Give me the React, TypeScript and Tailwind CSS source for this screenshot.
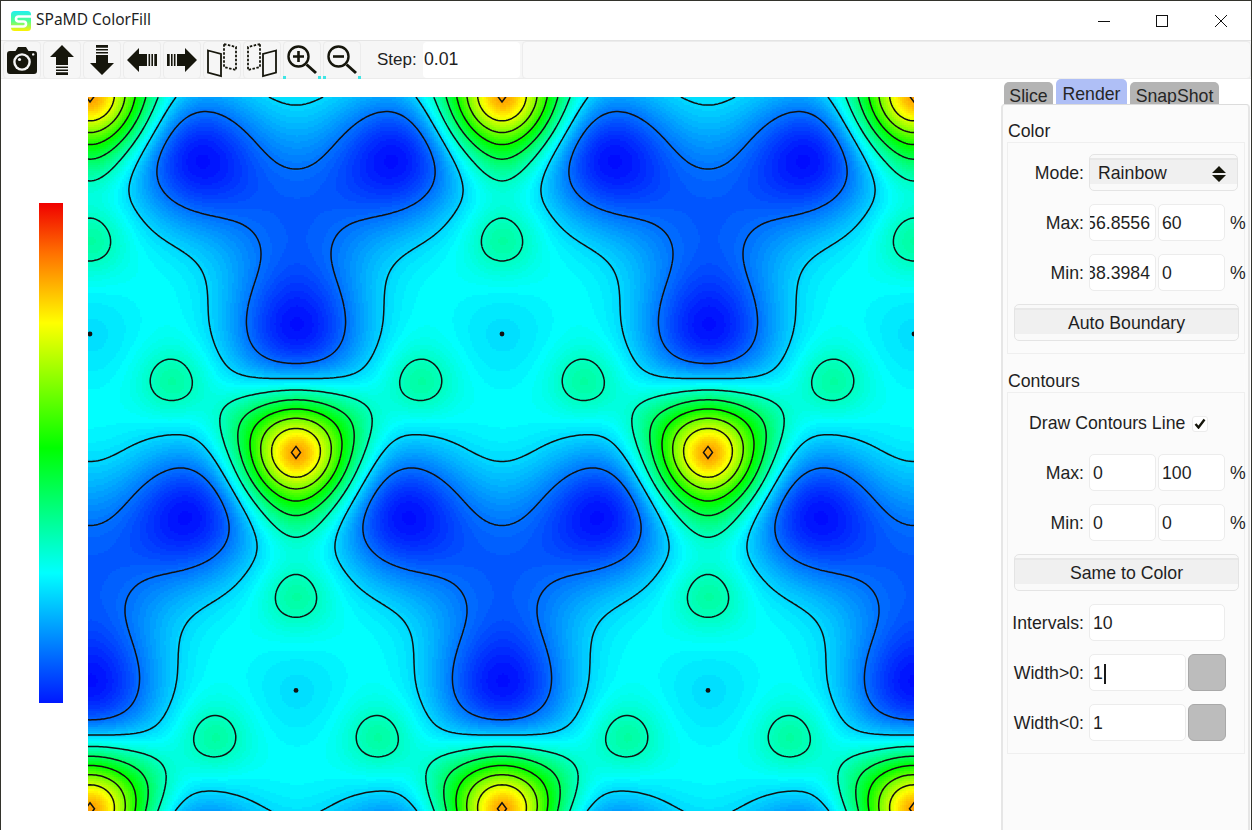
import { useMemo, type ReactNode } from "react";

const HEAT_W = 826;
const HEAT_H = 714;
const CELL = 2;
const LEVELS = [0.11, 0.21, 0.31, 0.41, 0.51, 0.61, 0.71];

type Blob = { x: number; y: number; a: number; s: number };

function latticePoints() {
  const pts: { x: number; y: number }[] = [];
  for (let j = -2; j <= 4; j++) {
    for (let k = -2; k <= 3; k++) {
      const y = 96 + 356.4 * j - 97;
      const x = (j % 2 === 0 ? 90 : 296) + 412 * k - 88;
      pts.push({ x, y });
    }
  }
  return pts;
}

const dirsDown = [
  [0, 1],
  [-0.866, -0.5],
  [0.866, -0.5],
];

function buildBlobs() {
  const blobs: Blob[] = [];
  for (const p of latticePoints()) {
    blobs.push({ x: p.x, y: p.y, a: 0.58, s: 40 });
    blobs.push({ x: p.x, y: p.y, a: 0.03, s: 13 });
    blobs.push({ x: p.x, y: p.y - 238, a: -0.115, s: 55 });
    blobs.push({ x: p.x, y: p.y - 238, a: -0.05, s: 105 });
    blobs.push({ x: p.x, y: p.y + 238, a: -0.058, s: 45 });
    for (const [dx, dy] of dirsDown) {
      blobs.push({ x: p.x + dx * 143, y: p.y + dy * 143, a: 0.085, s: 24 });
      blobs.push({ x: p.x + dx * 70, y: p.y + dy * 70, a: 0.03, s: 20 });
      blobs.push({ x: p.x - dx * 117, y: p.y - dy * 117, a: -0.24, s: 50 });
    }
  }
  return blobs;
}

function rainbow(t: number) {
  const v = Math.max(0, Math.min(1, t));
  let r = 0;
  let g = 0;
  let b = 0;
  if (v < 0.25) {
    g = v * 4 * 255;
    b = 255;
  } else if (v < 0.5) {
    g = 255;
    b = 255 * (1 - (v - 0.25) * 4);
  } else if (v < 0.75) {
    r = (v - 0.5) * 4 * 255;
    g = 255;
  } else {
    r = 255;
    g = 255 * (1 - (v - 0.75) * 4);
  }
  return `rgb(${Math.round(r)},${Math.round(g)},${Math.round(b)})`;
}

function buildHeat() {
  const cols = Math.ceil(HEAT_W / CELL) + 1;
  const rows = Math.ceil(HEAT_H / CELL) + 1;
  const field = new Float32Array(cols * rows).fill(0.29);
  for (const b of buildBlobs()) {
    const reach = b.s * 4;
    const x0 = Math.max(0, Math.floor((b.x - reach) / CELL));
    const x1 = Math.min(cols - 1, Math.ceil((b.x + reach) / CELL));
    const y0 = Math.max(0, Math.floor((b.y - reach) / CELL));
    const y1 = Math.min(rows - 1, Math.ceil((b.y + reach) / CELL));
    const k = 1 / (2 * b.s * b.s);
    for (let j = y0; j <= y1; j++) {
      for (let i = x0; i <= x1; i++) {
        const dx = i * CELL - b.x;
        const dy = j * CELL - b.y;
        field[j * cols + i] += b.a * Math.exp(-(dx * dx + dy * dy) * k);
      }
    }
  }

  // one path per colour band, row runs merged
  const bands = new Map<number, string[]>();
  const STEPS = 96;
  for (let j = 0; j < rows - 1; j++) {
    let start = 0;
    let cur = Math.round(field[j * cols] * STEPS);
    for (let i = 1; i <= cols - 1; i++) {
      const q = i < cols - 1 ? Math.round(field[j * cols + i] * STEPS) : -999;
      if (q !== cur) {
        if (!bands.has(cur)) bands.set(cur, []);
        bands.get(cur)!.push(`M${start * CELL} ${j * CELL}h${(i - start) * CELL}v${CELL}h${-(i - start) * CELL}z`);
        start = i;
        cur = q;
      }
    }
  }
  const fills = [...bands.entries()].map(([q, d]) => ({ color: rainbow(q / STEPS), d: d.join("") }));

  // marching squares
  const seg: string[] = [];
  for (const lv of LEVELS) {
    for (let j = 0; j < rows - 1; j++) {
      for (let i = 0; i < cols - 1; i++) {
        const a = field[j * cols + i];
        const b = field[j * cols + i + 1];
        const c = field[(j + 1) * cols + i + 1];
        const d = field[(j + 1) * cols + i];
        const pts: [number, number][] = [];
        if (a < lv !== b < lv) pts.push([i + (lv - a) / (b - a), j]);
        if (b < lv !== c < lv) pts.push([i + 1, j + (lv - b) / (c - b)]);
        if (d < lv !== c < lv) pts.push([i + (lv - d) / (c - d), j + 1]);
        if (a < lv !== d < lv) pts.push([i, j + (lv - a) / (d - a)]);
        for (let n = 0; n + 1 < pts.length; n += 2) {
          seg.push(
            `M${(pts[n][0] * CELL).toFixed(1)} ${(pts[n][1] * CELL).toFixed(1)}L${(pts[n + 1][0] * CELL).toFixed(1)} ${(pts[n + 1][1] * CELL).toFixed(1)}`,
          );
        }
      }
    }
  }
  return { fills, lines: seg.join("") };
}

function Heatmap() {
  const { fills, lines } = useMemo(buildHeat, []);
  const pts = latticePoints();
  return (
    <svg width={HEAT_W} height={HEAT_H} viewBox={`0 0 ${HEAT_W} ${HEAT_H}`} className="block shrink-0">
      <g shapeRendering="crispEdges">
        {fills.map((f) => (
          <path key={f.color} d={f.d} fill={f.color} />
        ))}
      </g>
      <path d={lines} fill="none" stroke="#111" strokeWidth="1.5" />
      {pts.map((p, n) => (
        <g key={n}>
          <path
            d={`M${p.x} ${p.y - 6}L${p.x + 4.5} ${p.y}L${p.x} ${p.y + 6}L${p.x - 4.5} ${p.y}Z`}
            fill="none"
            stroke="#111"
            strokeWidth="1.5"
          />
          <circle cx={p.x} cy={p.y + 238} r="2.4" fill="#111" />
        </g>
      ))}
    </svg>
  );
}

function ToolButton({ children, marks }: { children: ReactNode; marks?: boolean }) {
  return (
    <button
      type="button"
      className="relative flex h-[38px] w-[38px] items-center justify-center rounded-[4px] border border-[#ececec] bg-[#f6f6f6]"
    >
      {children}
      {marks && (
        <>
          <span className="absolute -bottom-px -left-px h-[3px] w-[3px] bg-[#3fe5e5]" />
          <span className="absolute -bottom-px -right-px h-[3px] w-[3px] bg-[#3fe5e5]" />
        </>
      )}
    </button>
  );
}

function ArrowIcon({ rotate }: { rotate: string }) {
  return (
    <svg width="30" height="30" viewBox="0 0 30 30" className={rotate}>
      <path d="M15 0L27 12H21V20H9V12H3Z" fill="#16160c" />
      <path d="M9 21.5h12v1.6H9zM9 24.4h12v1.6H9zM9 27.3h12V30H9z" fill="#16160c" />
    </svg>
  );
}

function PagesIcon({ flip }: { flip?: boolean }) {
  return (
    <svg width="32" height="36" viewBox="0 0 32 36" className={flip ? "-scale-x-100" : ""} fill="none">
      <path d="M2 8.5L15 12V34L2 30.5Z" stroke="#16160c" strokeWidth="1.8" />
      <path d="M18 2L30 5V28L18 25Z" stroke="#16160c" strokeWidth="1.8" strokeDasharray="2.5 1.5" />
    </svg>
  );
}

function ZoomIcon({ plus }: { plus?: boolean }) {
  return (
    <svg width="32" height="32" viewBox="0 0 32 32" fill="none" stroke="#16160c">
      <circle cx="12.5" cy="12.5" r="10" strokeWidth="2.4" />
      <path d="M20.5 20.5L30 29" strokeWidth="3" />
      <path d={plus ? "M7 12.5H18M12.5 7V18" : "M7 12.5H18"} strokeWidth="2.6" />
    </svg>
  );
}

function Input({ value, w, caret, clip }: { value: string; w: string; caret?: boolean; clip?: boolean }) {
  return (
    <div
      className={`flex h-[37px] items-center overflow-hidden rounded-[5px] border border-[#ececec] bg-white pt-[2px] ${w} ${clip ? "justify-end pr-[5px]" : "pl-[3px]"}`}
    >
      <span className="shrink-0 whitespace-nowrap">{value}</span>
      {caret && <span className="ml-[1px] h-[20px] w-[2px] bg-[#1a1a1a]" />}
    </div>
  );
}

function BevelButton({ children, className }: { children: ReactNode; className?: string }) {
  return (
    <div
      className={`flex h-[37px] items-center rounded-[5px] border border-[#e4e4e4] bg-[linear-gradient(to_bottom,#f9f9f9_0,#f9f9f9_3px,#e8e8e8_3px,#e8e8e8_5px,#f0f0f0_5px,#f0f0f0_29px,#fafafa_29px)] pt-[2px] ${className ?? ""}`}
    >
      {children}
    </div>
  );
}

function Row({ label, children }: { label?: string; children: ReactNode }) {
  return (
    <div className="flex h-[37px] items-center">
      <span className="w-[76px] shrink-0 whitespace-nowrap pt-[2px] text-right">{label}</span>
      <div className="ml-[5px] flex items-center gap-[2px]">{children}</div>
    </div>
  );
}

function Group({ title, className, children }: { title: string; className?: string; children: ReactNode }) {
  return (
    <div className={`ml-[4px] w-[238px] ${className ?? ""}`}>
      <div className="flex h-[37px] items-end pl-[1px] leading-[22px]">{title}</div>
      <div className="flex flex-col gap-[13px] border border-[#efefef] pb-[12px] pt-[11px]">{children}</div>
    </div>
  );
}

function Percent() {
  return <span className="ml-[3px] pt-[2px]">%</span>;
}

function Swatch() {
  return <div className="h-[37px] w-[38px] rounded-[6px] border border-[#a8a8a8] bg-[#bcbcbc]" />;
}

export default function App() {
  return (
    <div className="flex h-[830px] w-[1252px] flex-col overflow-hidden border-x border-t border-x-[#33332c] border-t-[#33332c] bg-white font-['Liberation_Sans',sans-serif] text-[17.7px] text-[#1f1f1f]">
      <header className="flex h-[39px] shrink-0 items-center font-['Noto_Sans',sans-serif] text-[15.5px]">
        <svg width="20" height="20" viewBox="0 0 20 20" className="ml-[10px]">
          <defs>
            <linearGradient id="logo" x1="0" y1="0" x2="0" y2="1">
              <stop offset="0" stopColor="#20f0f0" />
              <stop offset="0.5" stopColor="#50ff90" />
              <stop offset="1" stopColor="#fff200" />
            </linearGradient>
          </defs>
          <rect width="20" height="20" rx="3.5" fill="url(#logo)" />
          <path d="M20 5.5H7.5a2.5 2.5 0 0 0 0 5h5a2.5 2.5 0 0 1 0 5H0" fill="none" stroke="#fff" strokeWidth="2.6" />
        </svg>
        <span className="mb-[2px] ml-[5px]">SPaMD ColorFill</span>
        <div className="ml-auto flex">
          <div className="flex h-[39px] w-[58px] items-center justify-center">
            <svg width="12" height="12" viewBox="0 0 12 12">
              <path d="M0 6.5H12" stroke="#111" />
            </svg>
          </div>
          <div className="flex h-[39px] w-[58px] items-center justify-center">
            <svg width="12" height="12" viewBox="0 0 12 12">
              <rect x="0.5" y="0.5" width="11" height="11" fill="none" stroke="#111" />
            </svg>
          </div>
          <div className="flex h-[39px] w-[60px] items-center justify-center">
            <svg width="12" height="12" viewBox="0 0 12 12">
              <path d="M0 0L12 12M12 0L0 12" stroke="#111" />
            </svg>
          </div>
        </div>
      </header>

      <div className="flex h-[39px] shrink-0 items-center gap-[2px] border-y border-t-[#e4e4e4] border-b-[#ececec] bg-[#f6f6f6] pl-[2px]">
        <ToolButton>
          <svg width="30" height="28" viewBox="0 0 30 28">
            <path
              d="M3 5H8.5L11 1H19L21.5 5H27a3 3 0 0 1 3 3V25a3 3 0 0 1-3 3H3a3 3 0 0 1-3-3V8a3 3 0 0 1 3-3Z"
              fill="#16160c"
            />
            <circle cx="15" cy="16" r="8.8" fill="#f6f6f6" />
            <circle cx="15" cy="16" r="6.4" fill="#16160c" />
            <circle cx="12.5" cy="13.5" r="1.6" fill="#f6f6f6" />
            <circle cx="26.2" cy="8.4" r="1.2" fill="#f6f6f6" />
          </svg>
        </ToolButton>
        <ToolButton>
          <ArrowIcon rotate="" />
        </ToolButton>
        <ToolButton>
          <ArrowIcon rotate="rotate-180" />
        </ToolButton>
        <ToolButton>
          <ArrowIcon rotate="-rotate-90" />
        </ToolButton>
        <ToolButton>
          <ArrowIcon rotate="rotate-90" />
        </ToolButton>
        <ToolButton>
          <PagesIcon />
        </ToolButton>
        <ToolButton>
          <PagesIcon flip />
        </ToolButton>
        <ToolButton marks>
          <ZoomIcon plus />
        </ToolButton>
        <ToolButton marks>
          <ZoomIcon />
        </ToolButton>
        <div className="ml-[14px] flex items-center text-[17px]">
          <span className="w-[46px]">Step:</span>
          <div className="flex h-[36px] w-[97px] items-center rounded-[4px] bg-white pl-px text-[17.7px]">0.01</div>
        </div>
        <div className="h-[38px] flex-1 rounded-[4px] border border-[#ececec] bg-[#f9f9f9]" />
      </div>

      <main className="flex min-h-0 flex-1">
        <div className="flex w-[1000px] shrink-0 items-start pl-[38px] pt-[18px]">
          <div className="mt-[106px] h-[500px] w-[24px] shrink-0 bg-[linear-gradient(to_top,#0018ff,#00ffff_26%,#00ff00_51%,#ffff00_76%,#ff7000_90%,#f00000)]" />
          <div className="ml-[25px]">
            <Heatmap />
          </div>
        </div>

        <aside className="flex w-[249px] flex-col">
          <div className="flex h-[25px] shrink-0 items-end pl-[3px] text-[#262626]">
            <div className="flex h-[22px] w-[49px] items-center justify-center rounded-t-[5px] bg-[#b4b4b4] pt-[6px]">Slice</div>
            <div className="ml-[3px] flex h-[25px] w-[71px] items-center justify-center rounded-t-[5px] bg-[#afbff6] pt-[6px]">Render</div>
            <div className="ml-[3px] flex h-[22px] w-[89px] items-center justify-center rounded-t-[5px] bg-[#b4b4b4] pt-[6px]">SnapShot</div>
          </div>
          <div className="flex-1 rounded-t-[4px] border-x-2 border-t border-x-[#e6e6e6] border-t-[#dcdcdc] bg-[#fbfbfb]">
            <Group title="Color">
              <Row label="Mode:">
                <BevelButton className="w-[149px] pl-[8px]">
                  <span>Rainbow</span>
                  <svg width="14" height="16" viewBox="0 0 14 16" className="ml-auto mr-[11px]">
                    <path d="M7 0L14 7H0ZM0 9H14L7 16Z" fill="#16160c" />
                  </svg>
                </BevelButton>
              </Row>
              <Row label="Max:">
                <Input value="56.8556" w="w-[67px]" clip />
                <Input value="60" w="w-[67px]" />
                <Percent />
              </Row>
              <Row label="Min:">
                <Input value="88.3984" w="w-[67px]" clip />
                <Input value="0" w="w-[67px]" />
                <Percent />
              </Row>
              <div className="pl-[6px]">
                <BevelButton className="w-[225px] justify-center">Auto Boundary</BevelButton>
              </div>
            </Group>
            <Group title="Contours" className="mt-px">
              <div className="flex h-[37px] items-center pl-[21px] pt-[2px]">
                <span>Draw Contours Line</span>
                <span className="ml-[7px] flex h-[16px] w-[16px] items-center justify-center rounded-[3px] border border-[#ececec] bg-white">
                  <svg width="12" height="11" viewBox="0 0 12 11">
                    <path d="M1.5 6L4.5 9.5L10.5 1.5" fill="none" stroke="#16160c" strokeWidth="2.4" />
                  </svg>
                </span>
              </div>
              <Row label="Max:">
                <Input value="0" w="w-[67px]" />
                <Input value="100" w="w-[67px]" />
                <Percent />
              </Row>
              <Row label="Min:">
                <Input value="0" w="w-[67px]" />
                <Input value="0" w="w-[67px]" />
                <Percent />
              </Row>
              <div className="pl-[6px]">
                <BevelButton className="w-[225px] justify-center">Same to Color</BevelButton>
              </div>
              <Row label="Intervals:">
                <Input value="10" w="w-[136px]" />
              </Row>
              <Row label="Width>0:">
                <Input value="1" w="w-[97px]" caret />
                <Swatch />
              </Row>
              <Row label="Width<0:">
                <Input value="1" w="w-[97px]" />
                <Swatch />
              </Row>
            </Group>
          </div>
        </aside>
      </main>
    </div>
  );
}
